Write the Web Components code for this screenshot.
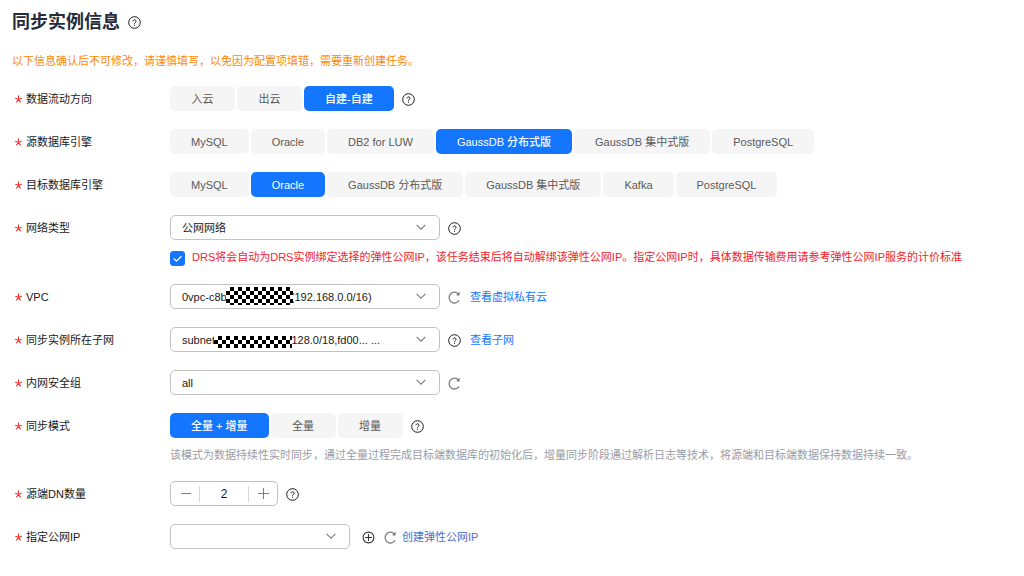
<!DOCTYPE html>
<html lang="zh-CN">
<head>
<meta charset="utf-8">
<meta name="viewport" content="width=device-width, initial-scale=1">
<title>同步实例信息</title>
<style>
    body {
        margin: 0;
        background: #fff;
        color: #191919;
        font: 11px/16px "Liberation Sans", "Noto Sans CJK SC", sans-serif;
    }
</style>
</head>
<body>
<sync-form heading="同步实例信息" notice="以下信息确认后不可修改，请谨慎填写，以免因为配置项填错，需要重新创建任务。">
    <choice-row label="数据流动方向" options="入云|出云|自建-自建" value="自建-自建">
        <ui-icon name="help"></ui-icon>
    </choice-row>
    <choice-row label="源数据库引擎" options="MySQL|Oracle|DB2 for LUW|GaussDB 分布式版|GaussDB 集中式版|PostgreSQL" value="GaussDB 分布式版"></choice-row>
    <choice-row label="目标数据库引擎" options="MySQL|Oracle|GaussDB 分布式版|GaussDB 集中式版|Kafka|PostgreSQL" value="Oracle"></choice-row>
    <select-row label="网络类型" value="公网网络">
        <ui-icon name="help"></ui-icon>
        <check-line slot="hint">DRS将会自动为DRS实例绑定选择的弹性公网IP，该任务结束后将自动解绑该弹性公网IP。指定公网IP时，具体数据传输费用请参考弹性公网IP服务的计价标准</check-line>
    </select-row>
    <select-row label="VPC" value="0vpc-c8b" blanks="21" rest="(192.168.0.0/16)">
        <mask-strip slot="mask" style="--x: 56px; --w: 67px; --h: 18px"></mask-strip>
        <ui-icon name="refresh"></ui-icon>
        <text-link>查看虚拟私有云</text-link>
    </select-row>
    <select-row label="同步实例所在子网" value="subnet" blanks="25" rest="128.0/18,fd00... ...">
        <mask-strip slot="mask" style="--x: 44px; --w: 78px; --h: 12px"></mask-strip>
        <ui-icon name="help"></ui-icon>
        <text-link>查看子网</text-link>
    </select-row>
    <select-row label="内网安全组" value="all">
        <ui-icon name="refresh"></ui-icon>
    </select-row>
    <choice-row label="同步模式" options="全量 + 增量|全量|增量" value="全量 + 增量">
        <ui-icon name="help"></ui-icon>
        <hint-text slot="hint">该模式为数据持续性实时同步，通过全量过程完成目标端数据库的初始化后，增量同步阶段通过解析日志等技术，将源端和目标端数据保持数据持续一致。</hint-text>
    </choice-row>
    <number-row label="源端DN数量" value="2">
        <ui-icon name="help"></ui-icon>
    </number-row>
    <select-row label="指定公网IP" value="" style="--select-width: 180px; --extra-gap: 12px">
        <ui-icon name="plus"></ui-icon>
        <ui-icon name="refresh"></ui-icon>
        <text-link style="--link: #526ecc; --link-gap: -4px">创建弹性公网IP</text-link>
    </select-row>
</sync-form>

<script>
const ICONS = {
    help: '<circle cx="6.5" cy="6.5" r="5.8" stroke="#191919"/><path d="M5 5.3a1.5 1.5 0 1 1 2.4 1.2c-.6.4-.9.6-.9 1.2" stroke="#191919"/><path d="M6.5 8.7v1.1" stroke="#191919"/>',
    refresh: '<path d="M11.2 9.4A5.4 5.4 0 1 1 10.6 3" stroke="#808080" stroke-width="1.3"/><path d="M11.6 1.2L11.3 4.3 8.6 3.9z" fill="#808080" stroke="#808080" stroke-width=".6"/>',
    plus: '<circle cx="6.5" cy="6.5" r="5.4" stroke="#333" stroke-width="1.1"/><path d="M6.5 3v7M3 6.5h7" stroke="#333" stroke-width="1.1"/>'
};

class UiIcon extends HTMLElement {
    constructor() {
        super();
        this.attachShadow({ mode: 'open' });
    }

    connectedCallback() {
        this.shadowRoot.innerHTML = `
            <style>
                :host { display: block; flex: none; height: 13px; margin-top: 1px; }
                svg { display: block; }
            </style>
            <svg width="13" height="13" viewBox="0 0 13 13" fill="none" aria-hidden="true">${ICONS[this.getAttribute('name')]}</svg>
        `;
    }
}

class TextLink extends HTMLElement {
    constructor() {
        super();
        this.attachShadow({ mode: 'open' }).innerHTML = `
            <style>
                :host { display: block; margin-left: var(--link-gap, 0px); white-space: nowrap; }
                a { color: var(--link, #1476ff); text-decoration: none; }
            </style>
            <a href="#"><slot></slot></a>
        `;
    }
}

class HintText extends HTMLElement {
    constructor() {
        super();
        this.attachShadow({ mode: 'open' }).innerHTML = `
            <style>
                :host { display: block; padding: 9px 0 0; color: #9a9ca6; }
            </style>
            <slot></slot>
        `;
    }
}

class CheckLine extends HTMLElement {
    constructor() {
        super();
        this.attachShadow({ mode: 'open' }).innerHTML = `
            <style>
                :host { display: block; padding: 9px 0 0; color: #f5222d; }
                label { display: flex; gap: 7px; }
                input {
                    appearance: none;
                    flex: none;
                    width: 15px;
                    height: 15px;
                    margin: 2px 0 0;
                    border: 1px solid #c2c2c2;
                    border-radius: 3px;
                }
                input:checked {
                    border-color: #1476ff;
                    background: #1476ff url("data:image/svg+xml,%3Csvg xmlns='http://www.w3.org/2000/svg' viewBox='0 0 13 13'%3E%3Cpath d='M2.6 6.4l2.8 2.8 5-5' fill='none' stroke='white' stroke-width='1.3'/%3E%3C/svg%3E") center / 13px;
                }
            </style>
            <label><input type="checkbox" checked><span><slot></slot></span></label>
        `;
    }
}

// checkerboard laid over the private part of a value
class MaskStrip extends HTMLElement {
    constructor() {
        super();
        this.attachShadow({ mode: 'open' }).innerHTML = `
            <style>
                :host {
                    position: absolute;
                    left: var(--x);
                    bottom: 4px;
                    width: var(--w);
                    height: var(--h);
                    background: repeating-conic-gradient(#000 0 25%, #fff 0 50%) 0 0 / 8px 8px;
                    pointer-events: none;
                }
            </style>
        `;
    }
}

// label on the left, control and its extras on the right
class FormRow extends HTMLElement {
    constructor() {
        super();
        this.attachShadow({ mode: 'open' });
    }

    connectedCallback() {
        const label = this.getAttribute('label');
        this.shadowRoot.innerHTML = `
            <style>
                :host { display: grid; grid-template-columns: 155px 1fr; }
                .label { display: flex; gap: 4px; height: 25px; align-items: center; }
                .line { display: flex; align-items: center; gap: var(--extra-gap, 8px); height: 25px; }
                .extras { display: flex; align-items: center; gap: 9px; }
                button, select, input { font: inherit; color: inherit; box-sizing: border-box; }
                ${this.styles()}
            </style>
            <label class="label" id="label" for="control">
                <svg width="7" height="8" viewBox="0 0 7 8" stroke="#f23030" stroke-width="1.1" fill="none" aria-hidden="true"><path d="M3.5 .5V4.2M.2 3.3L3.5 4.2l3.3-.9M3.5 4.2L1.4 7.4M3.5 4.2l2.1 3.2"/></svg>
                <span>${label}</span>
            </label>
            <div>
                <div class="line">${this.control()}<div class="extras"><slot></slot></div></div>
                <slot name="hint"></slot>
            </div>
        `;
    }
}

class ChoiceRow extends FormRow {
    styles() {
        return `
            .choices { display: flex; gap: 2px; }
            button {
                height: 25px;
                min-width: 65px;
                padding: 0 21px;
                border: 0;
                border-radius: 5px;
                background: #f5f5f5;
                color: #595959;
                white-space: nowrap;
            }
            button[aria-pressed="true"] { background: #1476ff; color: #fff; font-weight: 500; }
        `;
    }

    control() {
        const value = this.getAttribute('value');
        const buttons = this.getAttribute('options').split('|')
            .map(o => `<button type="button" aria-pressed="${o === value}">${o}</button>`)
            .join('');
        return `<div class="choices" role="group" aria-labelledby="label">${buttons}</div>`;
    }

    connectedCallback() {
        super.connectedCallback();
        const buttons = this.shadowRoot.querySelectorAll('button');
        buttons.forEach(button => button.addEventListener('click', () => {
            buttons.forEach(b => b.setAttribute('aria-pressed', b === button));
        }));
    }
}

class SelectRow extends FormRow {
    styles() {
        return `
            .box { position: relative; width: var(--select-width, 270px); }
            select {
                appearance: none;
                display: block;
                width: 100%;
                height: 25px;
                padding: 0 28px 0 11px;
                border: 1px solid #c2c2c2;
                border-radius: 5px;
                background: #fff;
            }
            .arrow { position: absolute; right: 14px; top: 9px; pointer-events: none; }
        `;
    }

    control() {
        const blanks = '&nbsp;'.repeat(Number(this.getAttribute('blanks')));
        const text = this.getAttribute('value') + blanks + (this.getAttribute('rest') || '');
        return `
            <div class="box">
                <select id="control"><option>${text}</option></select>
                <svg class="arrow" width="10" height="7" viewBox="0 0 10 7" fill="none" stroke="#808080" stroke-width="1.2" aria-hidden="true"><path d="M.6 .8L5 5.2 9.4 .8"/></svg>
                <slot name="mask"></slot>
            </div>
        `;
    }
}

class NumberRow extends FormRow {
    styles() {
        return `
            .stepper {
                box-sizing: border-box;
                display: flex;
                align-items: center;
                width: 108px;
                height: 25px;
                border: 1px solid #c2c2c2;
                border-radius: 5px;
            }
            button {
                display: flex;
                justify-content: center;
                align-items: center;
                width: 28px;
                height: 16px;
                padding: 0;
                border: 0;
                background: none;
            }
            input {
                flex: 1;
                min-width: 0;
                height: 16px;
                padding: 0;
                border: solid #d6d6d6;
                border-width: 0 1px;
                text-align: center;
                font-size: 12px;
            }
        `;
    }

    control() {
        return `
            <div class="stepper">
                <button type="button" aria-label="减少"><svg width="11" height="11" stroke="#808080"><path d="M1 5.5h10"/></svg></button>
                <input id="control" type="text" inputmode="numeric" value="${this.getAttribute('value')}">
                <button type="button" aria-label="增加"><svg width="11" height="11" stroke="#808080"><path d="M0 5.5h11M5.5 0v11"/></svg></button>
            </div>
        `;
    }

    connectedCallback() {
        super.connectedCallback();
        const input = this.shadowRoot.querySelector('input');
        const [minus, plus] = this.shadowRoot.querySelectorAll('button');
        minus.addEventListener('click', () => { input.value = Math.max(1, Number(input.value) - 1); });
        plus.addEventListener('click', () => { input.value = Number(input.value) + 1; });
    }
}

class SyncForm extends HTMLElement {
    constructor() {
        super();
        this.attachShadow({ mode: 'open' });
    }

    connectedCallback() {
        this.shadowRoot.innerHTML = `
            <style>
                :host { display: block; padding: 10px 12px 24px; }
                header { display: flex; align-items: center; gap: 8px; }
                h1 { margin: 0; font-size: 18px; line-height: 24px; color: #252b3a; }
                p { margin: 19px 0 17px; color: #ff8800; }
                .rows { display: grid; gap: 18px; padding-left: 3px; }
            </style>
            <header><h1>${this.getAttribute('heading')}</h1><ui-icon name="help"></ui-icon></header>
            <p>${this.getAttribute('notice')}</p>
            <div class="rows"><slot></slot></div>
        `;
    }
}

customElements.define('ui-icon', UiIcon);
customElements.define('text-link', TextLink);
customElements.define('hint-text', HintText);
customElements.define('check-line', CheckLine);
customElements.define('mask-strip', MaskStrip);
customElements.define('choice-row', ChoiceRow);
customElements.define('select-row', SelectRow);
customElements.define('number-row', NumberRow);
customElements.define('sync-form', SyncForm);
</script>
</body>
</html>
